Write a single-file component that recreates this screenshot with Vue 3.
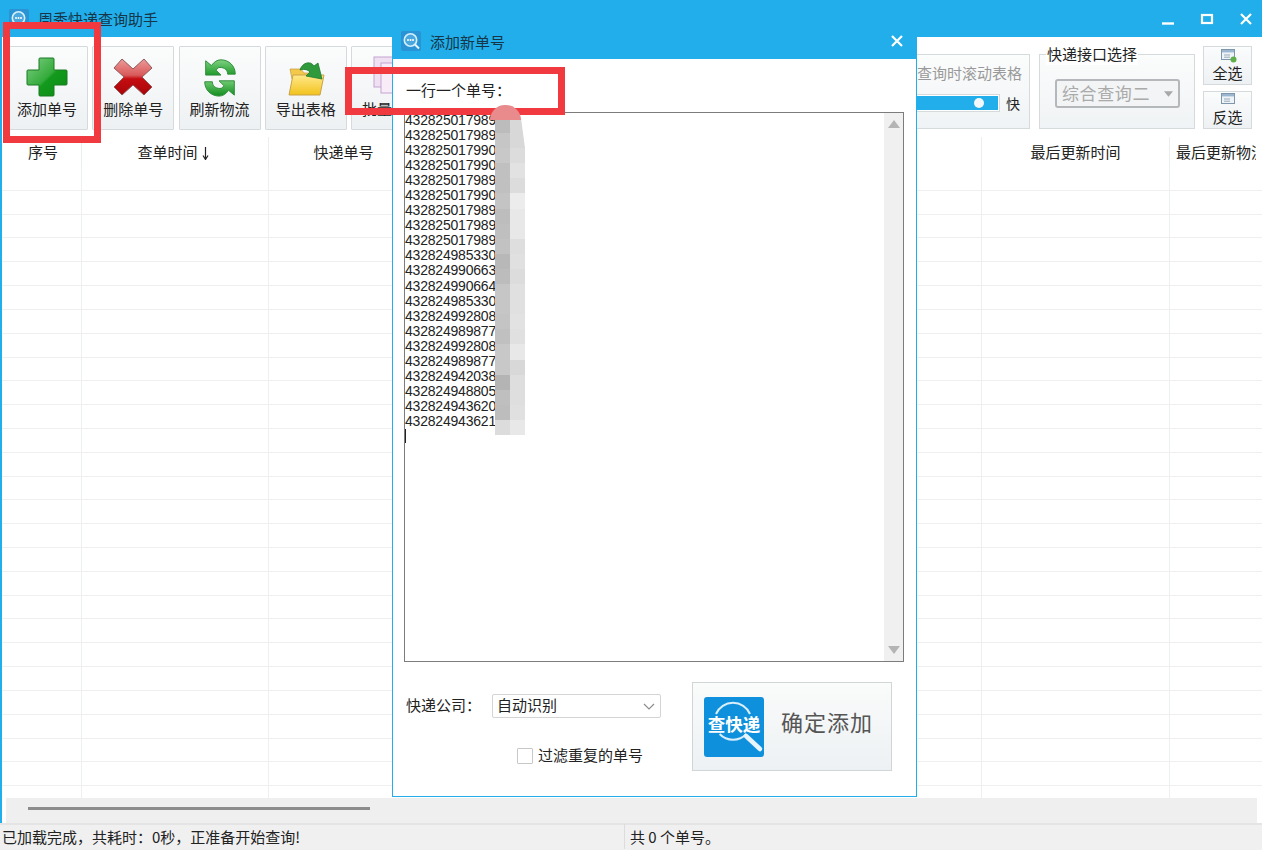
<script setup>
const tools = [
  { key: 'add', label: '添加单号' },
  { key: 'del', label: '删除单号' },
  { key: 'sync', label: '刷新物流' },
  { key: 'folder', label: '导出表格' },
  { key: 'docs', label: '批量导入' }
]
const columns = [
  { label: '序号', width: 80 },
  { label: '查单时间', width: 187, sort: true },
  { label: '快递单号', width: 150 },
  { label: '', width: 280 },
  { label: '', width: 283 },
  { label: '最后更新时间', width: 188 },
  { label: '最后更新物流', width: 86, clip: true }
]
const rows = Array.from({ length: 27 })
const numbers = [
  '432825017989', '432825017989', '432825017990', '432825017990', '432825017989',
  '432825017990', '432825017989', '432825017989', '432825017989', '432824985330',
  '432824990663', '432824990664', '432824985330', '432824992808', '432824989877',
  '432824992808', '432824989877', '432824942038', '432824948805', '432824943620',
  '432824943621'
]
const mosaic = [
  ['#bcbcbc', '#d8d8d8'], ['#c6c6c6', '#d8d8d8'], ['#c8c8c8', '#dcdcdc'], ['#c0c0c0', '#e2e2e2'],
  ['#c0c0c0', '#dcdcdc'], ['#c4c4c4', '#ececec'], ['#bdbdbd', '#e8e8e8'], ['#bfbfbf', '#e8e8e8'],
  ['#c2c2c2', '#dedede'], ['#b8b8b8', '#e0e0e0'], ['#bcbcbc', '#dcdcdc'], ['#c6c6c6', '#e0e0e0'],
  ['#c6c6c6', '#e0e0e0'], ['#c4c4c4', '#e2e2e2'], ['#c0c0c0', '#e0e0e0'], ['#c8c8c8', '#e8e8e8'],
  ['#c8c8c8', '#d8d8d8'], ['#b4b4b4', '#dedede'], ['#bfbfbf', '#dedede'], ['#bdbdbd', '#e0e0e0'],
  ['#dcdcdc', '#e8e8e8']
]
</script>

<template>
  <div class="app">
    <header class="titlebar">
      <svg class="logo" viewBox="0 0 20 20">
        <rect width="20" height="20" rx="2" fill="#2a93d4" />
        <circle cx="9.5" cy="9" r="6.2" fill="#4aa8de" stroke="#d6f0fb" stroke-width="1.6" />
        <circle cx="7" cy="9" r="1" fill="#fff" />
        <circle cx="9.5" cy="9" r="1" fill="#fff" />
        <circle cx="12" cy="9" r="1" fill="#fff" />
        <path d="M14 13.5l4 4" stroke="#e6f6fd" stroke-width="2" />
      </svg>
      <span class="app-name">周秀快递查询助手</span>
      <div class="win-controls">
        <svg viewBox="0 0 14 14"><path d="M1 11.5h12" stroke="#fff" stroke-width="2.4" /></svg>
        <svg viewBox="0 0 14 14"><rect x="2" y="3" width="10" height="8" fill="none" stroke="#fff" stroke-width="2.2" /></svg>
        <svg viewBox="0 0 14 14"><path d="M2 2l10 10M12 2L2 12" stroke="#fff" stroke-width="2.2" /></svg>
      </div>
    </header>

    <main class="body">
      <section class="toolbar">
        <div class="tools">
          <button v-for="t in tools" :key="t.key" class="tool">
            <svg v-if="t.key === 'add'" class="tool-icon" viewBox="0 0 42 42">
              <defs>
                <linearGradient id="gPlus" x1="0" y1="0" x2="1" y2="1">
                  <stop offset="0" stop-color="#7fd083" />
                  <stop offset="0.5" stop-color="#35ab3c" />
                  <stop offset="0.55" stop-color="#139a1d" />
                  <stop offset="1" stop-color="#0c8a14" />
                </linearGradient>
              </defs>
              <path d="M14 2h13a1 1 0 0 1 1 1v11h12a1 1 0 0 1 1 1v13a1 1 0 0 1-1 1H28v10a1 1 0 0 1-1 1H14a1 1 0 0 1-1-1V29H2a1 1 0 0 1-1-1V15a1 1 0 0 1 1-1h11V3a1 1 0 0 1 1-1z" fill="url(#gPlus)" stroke="#1a7a22" stroke-width="1" />
            </svg>
            <svg v-else-if="t.key === 'del'" class="tool-icon" viewBox="0 0 42 42">
              <defs>
                <linearGradient id="gCross" x1="0" y1="0" x2="0" y2="1">
                  <stop offset="0" stop-color="#ee9a9a" />
                  <stop offset="0.45" stop-color="#d85a5a" />
                  <stop offset="0.55" stop-color="#c40d12" />
                  <stop offset="1" stop-color="#a90509" />
                </linearGradient>
              </defs>
              <path d="M10 3l11 10L32 3l8 9-10 9 10 10-8 8-11-10-11 10-8-8 10-10L2 12z" fill="url(#gCross)" stroke="#8f5a5a" stroke-width="1" stroke-linejoin="round" />
            </svg>
            <svg v-else-if="t.key === 'sync'" class="tool-icon" viewBox="0 0 42 44">
              <defs>
                <linearGradient id="gSyncA" x1="0" y1="0" x2="0" y2="1">
                  <stop offset="0" stop-color="#7fd282" />
                  <stop offset="1" stop-color="#1f9a2a" />
                </linearGradient>
                <linearGradient id="gSyncB" x1="0" y1="0" x2="0" y2="1">
                  <stop offset="0" stop-color="#6fcb72" />
                  <stop offset="1" stop-color="#128c1e" />
                </linearGradient>
              </defs>
              <path d="M6 5L12 10C15 6 18 4 22 4C30 4 37 10 37 19L29 19C29 15 26 12 21 12C19 12 18 13 17 15L22 20L6 20Z" fill="url(#gSyncA)" stroke="#2f8a3a" stroke-width="1" stroke-linejoin="round" />
              <path d="M36 41L30 36C27 40 24 42 20 42C12 42 5 36 5 27L13 27C13 31 16 34 21 34C23 34 24 33 25 31L20 26L36 26Z" fill="url(#gSyncB)" stroke="#2f8a3a" stroke-width="1" stroke-linejoin="round" />
            </svg>
            <svg v-else-if="t.key === 'folder'" class="tool-icon" viewBox="0 0 42 42">
              <defs>
                <linearGradient id="gFolder" x1="0" y1="0" x2="0" y2="1">
                  <stop offset="0" stop-color="#ffe98a" />
                  <stop offset="1" stop-color="#f2c21c" />
                </linearGradient>
              </defs>
              <path d="M5 13h11l3 4h15v6H7z" fill="#f4c94a" stroke="#c9a34a" stroke-width="0.8" />
              <path d="M8 19h31l-4 20H4z" fill="url(#gFolder)" stroke="#c9a34a" stroke-width="1" stroke-linejoin="round" />
              <path d="M15 14C17 7 25 4 29 10L33 7L37 23L21 20L25 16C22 13 18 13 15 14Z" fill="#2f9a3c" stroke="#1f7a2c" stroke-width="0.8" stroke-linejoin="round" />
            </svg>
            <svg v-else class="tool-icon" viewBox="0 0 42 42">
              <rect x="3" y="1" width="22" height="30" fill="#efe0f2" stroke="#c4a4d2" stroke-width="1" />
              <rect x="10" y="7" width="22" height="30" fill="#f9ecf9" stroke="#c4a4d2" stroke-width="1" />
            </svg>
            <span>{{ t.label }}</span>
          </button>
        </div>

        <div class="right-tools">
          <div class="group speed">
            <span class="speed-title">查询时滚动表格</span>
            <div class="speed-row">
              <div class="slider"><i class="thumb"></i></div>
              <span>快</span>
            </div>
          </div>
          <div class="group api">
            <span class="legend">快递接口选择</span>
            <div class="api-select">
              <span>综合查询二</span>
              <svg viewBox="0 0 10 6"><path d="M0 0h10L5 6z" fill="#a8a8a8" /></svg>
            </div>
          </div>
          <div class="side-btns">
            <button class="side-btn">
              <svg viewBox="0 0 16 14">
                <rect x="0.5" y="0.5" width="13" height="10" fill="#eef3f8" stroke="#7f97ad" />
                <rect x="1" y="1" width="12" height="2.4" fill="#9cb6cf" />
                <path d="M3 6h6M3 8.2h6" stroke="#9aa9b8" />
                <circle cx="12.5" cy="10.5" r="3" fill="#5fb04a" />
              </svg>
              <span>全选</span>
            </button>
            <button class="side-btn">
              <svg viewBox="0 0 16 14">
                <rect x="0.5" y="0.5" width="13" height="10" fill="#eef3f8" stroke="#7f97ad" />
                <rect x="1" y="1" width="12" height="2.4" fill="#9cb6cf" />
                <path d="M3 6h6M3 8.2h6" stroke="#9aa9b8" />
              </svg>
              <span>反选</span>
            </button>
          </div>
        </div>
      </section>

      <section class="table">
        <div class="thead">
          <div
            v-for="(c, i) in columns"
            :key="i"
            class="th"
            :class="{ clip: c.clip }"
            :style="{ width: c.width + 'px' }"
          >{{ c.label }}<svg v-if="c.sort" class="sort" viewBox="0 0 7 13"><path d="M3.5 0v12M1 8.5l2.5 4 2.5-4" fill="none" stroke="#222" stroke-width="1.2" /></svg></div>
        </div>
        <div class="tbody">
          <div v-for="(r, i) in rows" :key="i" class="tr">
            <div v-for="(c, j) in columns" :key="j" class="td" :style="{ width: c.width + 'px' }"></div>
          </div>
        </div>
      </section>

      <div class="hscroll"><i class="hthumb"></i></div>
    </main>

    <footer class="status">
      <span class="status-left">已加载完成，共耗时：0秒，正准备开始查询!</span>
      <span class="status-right">共 0 个单号。</span>
    </footer>

    <div class="modal">
      <div class="modal-head">
        <svg class="logo" viewBox="0 0 20 20">
          <rect width="20" height="20" rx="2" fill="#2a93d4" />
          <circle cx="9.5" cy="9" r="6.2" fill="#4aa8de" stroke="#d6f0fb" stroke-width="1.6" />
          <circle cx="7" cy="9" r="1" fill="#fff" />
          <circle cx="9.5" cy="9" r="1" fill="#fff" />
          <circle cx="12" cy="9" r="1" fill="#fff" />
          <path d="M14 13.5l4 4" stroke="#e6f6fd" stroke-width="2" />
        </svg>
        <span class="modal-title">添加新单号</span>
        <svg class="modal-close" viewBox="0 0 14 14"><path d="M2 2l10 10M12 2L2 12" stroke="#fff" stroke-width="2.2" /></svg>
      </div>
      <div class="modal-body">
        <label class="hint">一行一个单号：</label>
        <div class="input-box">
          <div class="lines">
            <div v-for="(n, i) in numbers" :key="i" class="line">{{ n }}</div>
            <i class="caret"></i>
          </div>
          <div class="vscroll">
            <svg viewBox="0 0 12 8"><path d="M6 0l6 8H0z" fill="#b4b4b4" /></svg>
            <svg viewBox="0 0 12 8"><path d="M0 0h12L6 8z" fill="#b4b4b4" /></svg>
          </div>
        </div>
        <div class="modal-foot">
          <div class="foot-left">
            <div class="company">
              <span class="company-label">快递公司：</span>
              <div class="company-select">
                <span>自动识别</span>
                <svg viewBox="0 0 12 7"><path d="M1 1l5 5 5-5" fill="none" stroke="#8a8a8a" stroke-width="1.1" /></svg>
              </div>
            </div>
            <div class="filter">
              <i class="checkbox"></i>
              <span>过滤重复的单号</span>
            </div>
          </div>
          <button class="confirm">
            <svg class="confirm-logo" viewBox="0 0 60 60">
              <rect width="60" height="60" rx="3" fill="#0f90dc" />
              <path d="M12 17A18.5 18.5 0 0 1 46 17" fill="none" stroke="#d8eefa" stroke-width="2" />
              <path d="M15.6 37A18.5 18.5 0 0 0 42.4 37" fill="none" stroke="#d8eefa" stroke-width="2" />
              <path d="M42 39l14 13" stroke="#e8f5fc" stroke-width="4.5" stroke-linecap="round" />
              <text x="30" y="34" text-anchor="middle" class="logo-text">查快递</text>
            </svg>
            <span class="confirm-label">确定添加</span>
          </button>
        </div>
      </div>
    </div>

    <div class="redbox box-a"></div>
    <div class="redbox box-b"></div>

    <div class="mask">
      <div v-for="(m, i) in mosaic" :key="i" class="mask-row">
        <i :style="{ background: m[0] }"></i>
        <i :style="{ background: m[1] }"></i>
      </div>
    </div>
    <div class="mask-cap"></div>
  </div>
</template>

<style>
html, body { margin: 0; padding: 0; background: #fff; }
</style>

<style scoped>
.app {
  position: relative;
  width: 1262px;
  height: 850px;
  overflow: hidden;
  display: flex;
  flex-direction: column;
  background: #fff;
  color: #222;
  font-family: "Noto Sans CJK SC", "Liberation Sans", sans-serif;
  font-size: 15px;
}
button { font: inherit; color: inherit; cursor: default; padding: 0; }

.titlebar {
  height: 37px;
  flex: none;
  background: #22aeea;
  display: flex;
  align-items: center;
  padding: 0 0 0 9px;
}
.logo { width: 20px; height: 20px; flex: none; }
.app-name { margin-left: 9px; color: #143648; font-size: 15px; }
.win-controls { margin-left: auto; display: flex; gap: 25px; padding-right: 9px; }
.win-controls svg { width: 14px; height: 14px; }

.body {
  flex: 1;
  min-height: 0;
  display: flex;
  flex-direction: column;
  border-left: 2px solid #22aeea;
}

.toolbar {
  height: 100px;
  flex: none;
  display: flex;
  padding: 9px 10px 0 4px;
  box-sizing: border-box;
}
.tools { display: flex; gap: 4.25px; }
.tool {
  width: 82px;
  height: 84px;
  border: 1px solid #d5dadd;
  background: linear-gradient(#fbfcfc, #eef1f3);
  display: flex;
  flex-direction: column;
  align-items: center;
  justify-content: flex-end;
  padding-bottom: 9px;
  box-sizing: border-box;
  border-radius: 1px;
}
.tool span { line-height: 22px; white-space: nowrap; }
.tool-icon { width: 42px; height: 42px; margin-bottom: 0; }

.right-tools { margin-left: auto; display: flex; gap: 8px; }
.group {
  position: relative;
  margin-top: 8px;
  height: 75px;
  box-sizing: border-box;
  border: 1px solid #d5dadd;
  background: linear-gradient(#fbfcfc, #f0f3f5);
}
.speed {
  width: 170px;
  margin-right: 1px;
  display: flex;
  flex-direction: column;
  align-items: flex-end;
  padding: 8px 7px 0 0;
}
.speed-title { color: #999; font-size: 15px; line-height: 20px; white-space: nowrap; }
.speed-row { display: flex; align-items: center; gap: 6px; margin-top: 10px; line-height: 20px; margin-right: 1px; }
.speed-row span { font-size: 14px; width: 15px; }
.slider {
  position: relative;
  width: 96px;
  height: 18px;
  box-sizing: border-box;
  background: #22aeea;
  border: 2px solid #fff;
  outline: 1px solid #d5dadd;
  outline-offset: -1px;
}
.thumb {
  position: absolute;
  right: 14px;
  top: 2px;
  width: 10px;
  height: 10px;
  border-radius: 50%;
  background: #f4f8fb;
}
.api { width: 156px; }
.legend {
  position: absolute;
  left: 6px;
  top: -12px;
  padding: 0 1px;
  line-height: 22px;
  background: #fff;
  white-space: nowrap;
}
.api-select {
  margin: 24px 0 0 15px;
  width: 125px;
  height: 29px;
  box-sizing: border-box;
  border: 2px solid #b4b8bb;
  border-radius: 3px;
  background: #f2f4f5;
  display: flex;
  align-items: center;
  padding: 0 6px 3px 5px;
  color: #aaa;
  font-size: 17px;
  letter-spacing: 0.6px;
  justify-content: space-between;
}
.api-select svg { width: 9px; height: 6px; margin-right: -1px; margin-top: 3px; }
.side-btns { display: flex; flex-direction: column; gap: 6px; }
.side-btn {
  width: 49px;
  height: 38.5px;
  box-sizing: border-box;
  border: 1px solid #d5dadd;
  background: linear-gradient(#fbfcfc, #eef1f3);
  display: flex;
  flex-direction: column;
  align-items: center;
  justify-content: flex-end;
  padding-bottom: 2px;
}
.side-btn svg { width: 16px; height: 14px; margin-left: 2px; }
.side-btn span { line-height: 19px; }

.table { flex: 1; min-height: 0; overflow: hidden; }
.thead { display: flex; height: 30px; }
.th {
  flex: none;
  box-sizing: border-box;
  text-align: center;
  line-height: 30px;
  border-right: 1px solid #eceeee;
  white-space: nowrap;
}
.th:first-child { padding-left: 3px; }
.th:nth-child(2) { padding-right: 4px; }
.th:nth-child(3), .th:nth-child(4) { border-right-color: transparent; }
.th.clip { overflow: hidden; text-align: left; padding-left: 6px; border-right: 0; }
.sort { width: 7px; height: 13px; margin-left: 4px; vertical-align: -2px; }
.tbody { overflow: hidden; }
.tr { display: flex; height: 23.82px; box-sizing: border-box; border-bottom: 1px solid #eef0f0; }
.td { flex: none; box-sizing: border-box; border-right: 1px solid #eef0f0; }
.td:nth-child(3), .td:nth-child(4), .td:nth-child(7) { border-right-color: transparent; }

.hscroll {
  height: 25px;
  flex: none;
  background: #efefef;
  margin: 0 5px 0 4px;
  padding: 9px 0 0 22px;
  box-sizing: border-box;
}
.hthumb { display: block; width: 342px; height: 3px; background: #8c8c8c; }

.status {
  height: 27px;
  flex: none;
  box-sizing: border-box;
  background: #f0f0f0;
  border-top: 2px solid #e4e4e4;
  display: flex;
  align-items: center;
  font-size: 15px;
  padding-bottom: 2px;
}
.status-left { width: 625px; padding-left: 2px; box-sizing: border-box; border-right: 1px solid #dcdcdc; line-height: 25px; white-space: nowrap; }
.status-right { padding-left: 5px; white-space: pre; }

.modal {
  position: absolute;
  left: 392px;
  top: 22px;
  width: 525px;
  height: 775px;
  box-sizing: border-box;
  border: 1px solid #22aeea;
  background: #fff;
  display: flex;
  flex-direction: column;
}
.modal-head {
  height: 36px;
  flex: none;
  background: #22aeea;
  display: flex;
  align-items: center;
  padding: 0 12px 0 8px;
}
.modal-title { margin-left: 9px; color: #143648; font-size: 15px; }
.modal-close { margin-left: auto; width: 14px; height: 14px; }
.modal-body { flex: 1; min-height: 0; padding: 21px 12px 0 12px; display: flex; flex-direction: column; }
.hint { line-height: 20px; font-size: 15px; padding-left: 1px; }
.input-box {
  margin: 12px 0 0 -1px;
  height: 550px;
  box-sizing: border-box;
  border: 1px solid #7c7c7c;
  display: flex;
}
.lines { position: relative; flex: 1; font-family: "Liberation Sans", sans-serif; font-size: 14px; letter-spacing: -0.2px; line-height: 15.05px; color: #222; }
.line { height: 15.05px; white-space: nowrap; }
.caret { display: block; width: 1px; height: 14px; background: #222; margin-top: 0; }
.vscroll {
  width: 19px;
  background: #f0f0f0;
  display: flex;
  flex-direction: column;
  justify-content: space-between;
  align-items: center;
  padding: 7px 0;
  box-sizing: border-box;
}
.vscroll svg { width: 12px; height: 8px; }
.modal-foot { display: flex; margin-top: 20px; padding-right: 12px; justify-content: space-between; }
.foot-left { display: flex; flex-direction: column; }
.company { display: flex; align-items: center; margin-top: 12px; padding-left: 1px; font-size: 15px; }
.company-label { width: 86px; white-space: nowrap; margin-bottom: 3px; }
.company-select {
  width: 169px;
  height: 24px;
  box-sizing: border-box;
  border: 1px solid #d4d4d4;
  border-radius: 2px;
  display: flex;
  align-items: center;
  justify-content: space-between;
  padding: 0 5px 0 4px;
}
.company-select span { margin-bottom: 3px; }
.company-select svg { width: 12px; height: 7px; }
.filter { display: flex; align-items: center; gap: 5px; margin: 27px 0 0 112px; height: 22px; font-size: 15px; }
.filter span { margin-bottom: 3px; }
.checkbox { width: 14px; height: 14px; border: 1px solid #c8c8c8; border-radius: 1px; display: block; }
.confirm {
  width: 200px;
  height: 89px;
  box-sizing: border-box;
  border: 1px solid #d0d5d8;
  background: linear-gradient(#fafbfb, #edf1f3);
  display: flex;
  align-items: center;
  padding: 0 0 0 11px;
  font-size: 22px;
  color: #555;
  letter-spacing: 1px;
}
.confirm-logo { width: 60px; height: 60px; margin-right: 17px; }
.confirm-label { margin-bottom: 12px; }
.logo-text { fill: #fff; font-size: 17.5px; font-weight: 700; letter-spacing: 0; }

.redbox { position: absolute; box-sizing: border-box; border: 7px solid #f13a3f; pointer-events: none; }
.box-a { left: 3px; top: 22px; width: 98px; height: 121px; }
.box-b { left: 345px; top: 67px; width: 220px; height: 48px; }

.mask {
  position: absolute;
  left: 495px;
  top: 118px;
  width: 30px;
  clip-path: polygon(0 0, 26px 0, 30px 30px, 30px 100%, 0 100%);
}
.mask-row { display: flex; height: 15.1px; }
.mask-row i { display: block; width: 15px; }
.mask-cap {
  position: absolute;
  left: 490px;
  top: 105px;
  width: 31px;
  height: 15px;
  border-radius: 16px 16px 0 0;
  background: #e98a8c;
}
</style>
